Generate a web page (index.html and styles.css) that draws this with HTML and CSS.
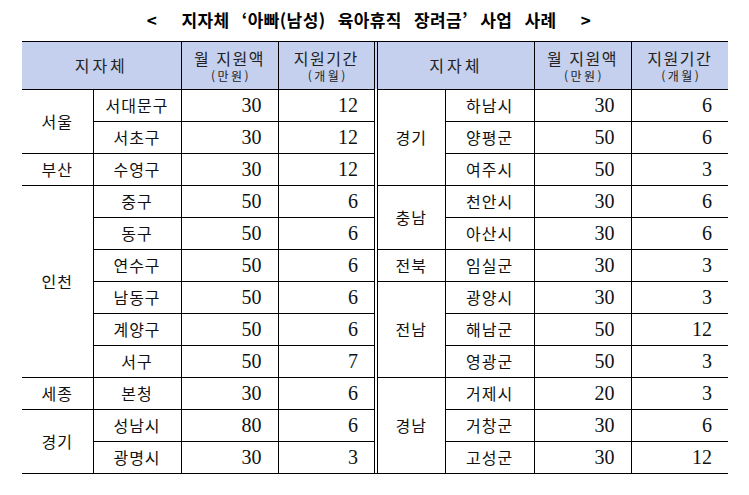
FILE: index.html
```html
<!DOCTYPE html>
<html lang="ko">
<head>
<meta charset="utf-8">
<link rel="stylesheet" href="styles.css">
</head>
<body>
<div class="page">
  <div class="title">&lt;&nbsp; 지자체 ‘아빠(남성) 육아휴직 장려금’ 사업 사례 &nbsp;&gt;</div>
  <div class="frame">
    <table class="grid">
      <colgroup>
        <col class="c1"><col class="c2"><col class="c3"><col class="c4">
        <col class="c5"><col class="c6"><col class="c7"><col class="c8">
      </colgroup>
      <thead>
        <tr class="head">
          <th colspan="2"><span class="h-main wide">지자체</span></th>
          <th><span class="h-main">월 지원액</span><span class="h-sub">(만원)</span></th>
          <th class="mid"><span class="h-main">지원기간</span><span class="h-sub">(개월)</span></th>
          <th colspan="2"><span class="h-main wide">지자체</span></th>
          <th><span class="h-main">월 지원액</span><span class="h-sub">(만원)</span></th>
          <th><span class="h-main">지원기간</span><span class="h-sub">(개월)</span></th>
        </tr>
      </thead>
      <tbody>
        <tr>
          <td class="reg" rowspan="2">서울</td><td class="sub">서대문구</td><td class="num">30</td><td class="num mid">12</td>
          <td class="reg" rowspan="3">경기</td><td class="sub">하남시</td><td class="num">30</td><td class="num">6</td>
        </tr>
        <tr>
          <td class="sub">서초구</td><td class="num">30</td><td class="num mid">12</td>
          <td class="sub">양평군</td><td class="num">50</td><td class="num">6</td>
        </tr>
        <tr>
          <td class="reg">부산</td><td class="sub">수영구</td><td class="num">30</td><td class="num mid">12</td>
          <td class="sub">여주시</td><td class="num">50</td><td class="num">3</td>
        </tr>
        <tr>
          <td class="reg" rowspan="6">인천</td><td class="sub">중구</td><td class="num">50</td><td class="num mid">6</td>
          <td class="reg" rowspan="2">충남</td><td class="sub">천안시</td><td class="num">30</td><td class="num">6</td>
        </tr>
        <tr>
          <td class="sub">동구</td><td class="num">50</td><td class="num mid">6</td>
          <td class="sub">아산시</td><td class="num">30</td><td class="num">6</td>
        </tr>
        <tr>
          <td class="sub">연수구</td><td class="num">50</td><td class="num mid">6</td>
          <td class="reg">전북</td><td class="sub">임실군</td><td class="num">30</td><td class="num">3</td>
        </tr>
        <tr>
          <td class="sub">남동구</td><td class="num">50</td><td class="num mid">6</td>
          <td class="reg" rowspan="3">전남</td><td class="sub">광양시</td><td class="num">30</td><td class="num">3</td>
        </tr>
        <tr>
          <td class="sub">계양구</td><td class="num">50</td><td class="num mid">6</td>
          <td class="sub">해남군</td><td class="num">50</td><td class="num">12</td>
        </tr>
        <tr>
          <td class="sub">서구</td><td class="num">50</td><td class="num mid">7</td>
          <td class="sub">영광군</td><td class="num">50</td><td class="num">3</td>
        </tr>
        <tr>
          <td class="reg">세종</td><td class="sub">본청</td><td class="num">30</td><td class="num mid">6</td>
          <td class="reg" rowspan="3">경남</td><td class="sub">거제시</td><td class="num">20</td><td class="num">3</td>
        </tr>
        <tr>
          <td class="reg" rowspan="2">경기</td><td class="sub">성남시</td><td class="num">80</td><td class="num mid">6</td>
          <td class="sub">거창군</td><td class="num">30</td><td class="num">6</td>
        </tr>
        <tr>
          <td class="sub">광명시</td><td class="num">30</td><td class="num mid">3</td>
          <td class="sub">고성군</td><td class="num">30</td><td class="num">12</td>
        </tr>
      </tbody>
    </table>
  </div>
</div>
</body>
</html>
```

FILE: styles.css
```css
html, body {
  margin: 0;
  padding: 0;
  background: #ffffff;
}

.page {
  width: 749px;
  padding: 0 21px 0 22px;
  box-sizing: border-box;
  font-family: "Liberation Serif", "Noto Sans CJK KR", serif;
  color: #111;
}

.title {
  height: 41px;
  display: flex;
  align-items: center;
  justify-content: center;
  padding-right: 12px;
  padding-bottom: 2px;
  box-sizing: border-box;
  font-family: "Noto Sans CJK KR", "Liberation Sans", sans-serif;
  font-weight: 700;
  font-size: 17px;
  word-spacing: 7px;
  letter-spacing: 0.4px;
  color: #000;
  white-space: nowrap;
}

.frame {
  width: 706px;
  border-top: 1px solid #000;
  border-bottom: 1px solid #000;
}

.grid {
  width: 706px;
  table-layout: fixed;
  border-collapse: collapse;
  border-style: hidden;
}

.c1 { width: 71px; }
.c2 { width: 88px; }
.c3 { width: 97px; }
.c4 { width: 98px; }
.c5 { width: 69px; }
.c6 { width: 89px; }
.c7 { width: 97px; }
.c8 { width: 97px; }

.grid th,
.grid td {
  border: 1px solid #000;
  padding: 0;
  font-weight: 400;
}

.grid .mid {
  border-right: 4px double #000;
}

.head {
  height: 47px;
  background: #c5d0ee;
}

.head th {
  vertical-align: middle;
  text-align: center;
  font-family: "Noto Sans CJK KR", sans-serif;
  color: #222;
}

.h-main {
  display: block;
  font-size: 16px;
  line-height: 21px;
  letter-spacing: 1.5px;
}

.h-main.wide {
  letter-spacing: 3px;
}

.h-sub {
  display: block;
  font-size: 12px;
  line-height: 14px;
  letter-spacing: 2.5px;
  padding-left: 3px;
}

.grid tbody tr {
  height: 32px;
}

.reg,
.sub {
  text-align: center;
  font-family: "Noto Sans CJK KR", sans-serif;
  font-size: 16px;
  letter-spacing: 1px;
}

.num {
  text-align: right;
  font-family: "Liberation Serif", serif;
  font-size: 20px;
}

.grid td.num {
  padding-right: 16px;
}
```
